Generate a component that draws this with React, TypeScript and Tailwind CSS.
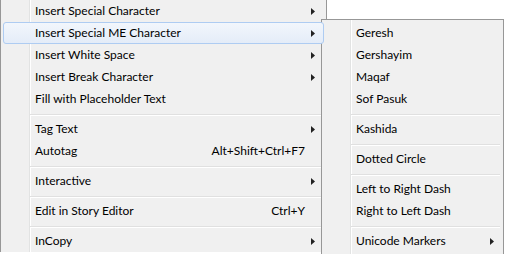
import React from 'react';

type Item =
  | { kind: 'item'; label: string; shortcut?: string; sub?: boolean; active?: boolean }
  | { kind: 'sep' };

const mainItems: Item[] = [
  { kind: 'item', label: 'Insert Special Character', sub: true },
  { kind: 'item', label: 'Insert Special ME Character', sub: true, active: true },
  { kind: 'item', label: 'Insert White Space', sub: true },
  { kind: 'item', label: 'Insert Break Character', sub: true },
  { kind: 'item', label: 'Fill with Placeholder Text' },
  { kind: 'sep' },
  { kind: 'item', label: 'Tag Text', sub: true },
  { kind: 'item', label: 'Autotag', shortcut: 'Alt+Shift+Ctrl+F7' },
  { kind: 'sep' },
  { kind: 'item', label: 'Interactive', sub: true },
  { kind: 'sep' },
  { kind: 'item', label: 'Edit in Story Editor', shortcut: 'Ctrl+Y' },
  { kind: 'sep' },
  { kind: 'item', label: 'InCopy', sub: true },
];

const subItems: Item[] = [
  { kind: 'item', label: 'Geresh' },
  { kind: 'item', label: 'Gershayim' },
  { kind: 'item', label: 'Maqaf' },
  { kind: 'item', label: 'Sof Pasuk' },
  { kind: 'sep' },
  { kind: 'item', label: 'Kashida' },
  { kind: 'sep' },
  { kind: 'item', label: 'Dotted Circle' },
  { kind: 'sep' },
  { kind: 'item', label: 'Left to Right Dash' },
  { kind: 'item', label: 'Right to Left Dash' },
  { kind: 'sep' },
  { kind: 'item', label: 'Unicode Markers', sub: true },
];

const Arrow = () => (
  <svg width="4" height="7" viewBox="0 0 4 7" className="block">
    <polygon points="0,0 4,3.5 0,7" fill="#222" />
  </svg>
);

const MenuRows = ({ items, arrowPad }: { items: Item[]; arrowPad: string }) => (
  <>
    {items.map((it, i) =>
      it.kind === 'sep' ? (
        <div key={i} className="relative h-[8px] pl-[29px] pr-[3px] pt-[4px]">
          <div className="h-px bg-[#e0e0e0]" />
          <div className="h-px bg-white" />
        </div>
      ) : (
        <div
          key={i}
          className={`relative z-10 mx-[2px] flex h-[22px] items-center rounded-[3px] border pl-[31px] ${arrowPad} ${
            it.active
              ? 'border-[#aeccf2] bg-gradient-to-b from-[#f2f6fc] to-[#e4ecf8]'
              : 'border-transparent'
          }`}
        >
          <span className="flex-1 whitespace-nowrap">{it.label}</span>
          {it.shortcut && <span className="mr-[6px] whitespace-nowrap">{it.shortcut}</span>}
          <span className="flex w-[4px] justify-end">{it.sub && <Arrow />}</span>
        </div>
      )
    )}
  </>
);

export default function App() {
  return (
    <div
      className="relative h-[254px] w-[505px] overflow-hidden bg-white text-[12px] leading-none text-black"
      style={{ fontFamily: 'Lato, "Noto Sans", sans-serif' }}
    >
      {/* main context menu */}
      <div className="relative w-[327px] border-x border-[#979797] bg-[#f0f0f0]">
        <div className="absolute inset-y-0 left-[28px] w-[2px] border-l border-[#e2e3e3] bg-white" />
        <MenuRows items={mainItems} arrowPad="pr-[8px]" />
      </div>

      {/* submenu */}
      <div className="absolute left-[321px] top-[19px] w-[183px] border border-[#979797] bg-[#f0f0f0] pt-[2px] pb-[2px]">
        <div className="absolute inset-y-0 left-[28px] w-[2px] border-l border-[#e2e3e3] bg-white" />
        <MenuRows items={subItems} arrowPad="pr-[6px]" />
      </div>
    </div>
  );
}
